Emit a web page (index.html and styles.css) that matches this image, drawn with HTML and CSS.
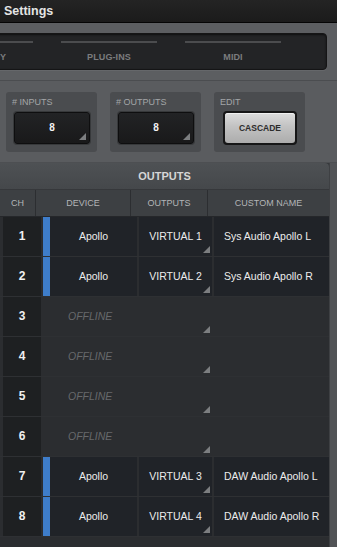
FILE: index.html
```html
<!DOCTYPE html>
<html>
<head>
<meta charset="utf-8">
<link rel="stylesheet" href="styles.css">
</head>
<body>
<div class="app">
  <div class="titlebar">Settings</div>
  <div class="top">
    <div class="tabs">
      <div class="tab tab-first"><span class="tab-line"></span><span class="tab-label">Y</span></div>
      <div class="tab"><span class="tab-line"></span><span class="tab-label">PLUG-INS</span></div>
      <div class="tab"><span class="tab-line"></span><span class="tab-label">MIDI</span></div>
    </div>
  </div>
  <div class="controls">
    <div class="panel">
      <div class="panel-label"># INPUTS</div>
      <div class="select-box">8<span class="corner"></span></div>
    </div>
    <div class="panel">
      <div class="panel-label"># OUTPUTS</div>
      <div class="select-box">8<span class="corner"></span></div>
    </div>
    <div class="panel">
      <div class="panel-label">EDIT</div>
      <div class="btn"><span>CASCADE</span></div>
    </div>
  </div>
  <div class="table-wrap">
    <div class="table">
      <div class="thead-title">OUTPUTS</div>
      <div class="thead-cols">
        <div class="th">CH</div>
        <div class="th">DEVICE</div>
        <div class="th">OUTPUTS</div>
        <div class="th">CUSTOM NAME</div>
      </div>
      <div class="rows">
        <div class="row online">
          <div class="ch">1</div><div class="bar"></div>
          <div class="cell dev">Apollo</div>
          <div class="cell out">VIRTUAL 1<span class="corner"></span></div>
          <div class="cell name">Sys Audio Apollo L</div>
        </div>
        <div class="row online">
          <div class="ch">2</div><div class="bar"></div>
          <div class="cell dev">Apollo</div>
          <div class="cell out">VIRTUAL 2<span class="corner"></span></div>
          <div class="cell name">Sys Audio Apollo R</div>
        </div>
        <div class="row offline">
          <div class="ch">3</div><div class="nobar"></div>
          <div class="off-dev">OFFLINE</div>
          <div class="off-out"><span class="corner"></span></div>
        </div>
        <div class="row offline">
          <div class="ch">4</div><div class="nobar"></div>
          <div class="off-dev">OFFLINE</div>
          <div class="off-out"><span class="corner"></span></div>
        </div>
        <div class="row offline">
          <div class="ch">5</div><div class="nobar"></div>
          <div class="off-dev">OFFLINE</div>
          <div class="off-out"><span class="corner"></span></div>
        </div>
        <div class="row offline">
          <div class="ch">6</div><div class="nobar"></div>
          <div class="off-dev">OFFLINE</div>
          <div class="off-out"><span class="corner"></span></div>
        </div>
        <div class="row online">
          <div class="ch">7</div><div class="bar"></div>
          <div class="cell dev">Apollo</div>
          <div class="cell out">VIRTUAL 3<span class="corner"></span></div>
          <div class="cell name">DAW Audio Apollo L</div>
        </div>
        <div class="row online">
          <div class="ch">8</div><div class="bar"></div>
          <div class="cell dev">Apollo</div>
          <div class="cell out">VIRTUAL 4<span class="corner"></span></div>
          <div class="cell name">DAW Audio Apollo R</div>
        </div>
      </div>
    </div>
    <div class="side"></div>
  </div>
</div>
</body>
</html>
```
FILE: styles.css
```css
* { box-sizing: border-box; }
html, body { margin: 0; padding: 0; background: #5a5c5f; }
body { font-family: "Liberation Sans", Arial, sans-serif; }

.app {
  width: 337px;
  height: 547px;
  overflow: hidden;
  background: #5a5c5f;
  display: flex;
  flex-direction: column;
}

.titlebar {
  height: 23px;
  flex: none;
  background: linear-gradient(#242424, #1b1b1b);
  border-bottom: 1px solid #050505;
  color: #e4e4e4;
  font-weight: bold;
  font-size: 12.5px;
  line-height: 22px;
  padding-left: 4px;
}

.top {
  height: 58px;
  flex: none;
  padding-top: 10px;
  border-bottom: 1px solid #4b4d50;
  background: #5c5e61;
}

.tabs {
  display: flex;
  margin-left: -80px;
  width: 407px;
  height: 37px;
  padding-left: 2px;
  background: #232426;
  border: 1px solid #151516;
  border-radius: 4px;
  box-shadow: inset 0 1px 2px rgba(0,0,0,0.6), 0 1px 0 rgba(255,255,255,0.06);
}

.tab {
  width: 124px;
  display: flex;
  flex-direction: column;
  align-items: center;
}

.tab-first { align-items: flex-end; }

.tab-first .tab-label { margin-right: 41px; }

.tab-first .tab-line { margin-right: 14px; }

.tab-line {
  width: 96px;
  height: 2px;
  margin-top: 7px;
  background: #4b4c4e;
}

.tab-label {
  margin-top: 9px;
  font-size: 9px;
  font-weight: bold;
  color: #7b7c7e;
  letter-spacing: 0.1px;
}

.controls {
  height: 82px;
  flex: none;
  display: flex;
  gap: 13px;
  padding: 11px 0 0 6px;
  background: #5a5c5f;
  border-bottom: 1px solid #4d4f52;
}

.panel {
  width: 91px;
  height: 60px;
  background: #4a4c4f;
  border-radius: 3px;
  padding: 5px 0 0 6px;
}

.panel-label {
  font-size: 9px;
  color: #a4a6a8;
  line-height: 11px;
  height: 15px;
}

.select-box {
  position: relative;
  width: 76px;
  height: 32px;
  margin-left: 2px;
  background: linear-gradient(#222325, #19191a);
  border: 1px solid #0e0e0f;
  border-radius: 3px;
  box-shadow: 0 0 0 1px rgba(0,0,0,0.25);
  color: #f2f2f2;
  font-size: 10px;
  font-weight: bold;
  text-align: center;
  line-height: 30px;
}

.corner {
  position: absolute;
  right: 3px;
  bottom: 3px;
  width: 0;
  height: 0;
  border-style: solid;
  border-width: 0 0 7px 7px;
  border-color: transparent transparent #7c7e80 transparent;
}

.btn {
  width: 74px;
  height: 34px;
  margin-left: 3px;
  margin-top: -1px;
  padding: 2px;
  background: #161617;
  border-radius: 4px;
}

.btn span {
  display: block;
  height: 100%;
  border-radius: 3px;
  background: linear-gradient(#dcdcdc, #c2c2c2 45%, #acacac);
  box-shadow: inset 0 1px 0 #f0f0f0;
  color: #2c2c2c;
  font-size: 8.5px;
  font-weight: bold;
  text-align: center;
  line-height: 30px;
}

.table-wrap {
  flex: 1;
  display: flex;
  background: #37393c;
}

.table {
  width: 329px;
  flex: none;
  display: flex;
  flex-direction: column;
  background: #2b2d30;
  border-radius: 0 4px 0 0;
  overflow: hidden;
}

.side {
  flex: 1;
  background: #525457;
  border-left: 1px solid #3e4043;
}

.thead-title {
  height: 27px;
  background: linear-gradient(#4e5154, #45484b);
  color: #d6d6d6;
  font-size: 11px;
  font-weight: bold;
  text-align: center;
  line-height: 27px;
  border-bottom: 1px solid #36383b;
}

.thead-cols {
  height: 27px;
  display: grid;
  grid-template-columns: 35px 95px 77px 1fr;
  background: #3d4043;
  border-bottom: 1px solid #25272a;
}

.th {
  font-size: 9px;
  color: #b3b5b7;
  text-align: center;
  line-height: 26px;
  border-left: 1px solid #2c2e31;
}

.th:first-child { border-left: none; }

.rows {
  display: flex;
  flex-direction: column;
}

.row {
  height: 40px;
  display: flex;
  padding-left: 3px;
  border-bottom: 1px solid #2e3033;
}

.ch {
  width: 38px;
  background: #1e2022;
  color: #f0f0f0;
  font-weight: bold;
  font-size: 12px;
  text-align: center;
  line-height: 39px;
}

.bar {
  width: 7px;
  margin-left: 2px;
  background: #3e7dca;
}

.nobar {
  width: 7px;
  margin-left: 2px;
}

.cell {
  position: relative;
  background: #202328;
  color: #ececec;
  font-size: 10.5px;
  line-height: 39px;
}

.dev { width: 87px; text-align: center; }
.out { width: 73px; margin-left: 2px; text-align: center; }
.name { flex: 1; margin-left: 2px; padding-left: 10px; white-space: nowrap; }

.out .corner { right: 2px; bottom: 3px; }

.off-dev {
  width: 87px;
  padding-left: 18px;
  font-size: 10.5px;
  font-style: italic;
  color: #67696c;
  line-height: 39px;
}

.off-out {
  position: relative;
  width: 73px;
  margin-left: 2px;
}

.off-out .corner { right: 2px; bottom: 3px; }
```
